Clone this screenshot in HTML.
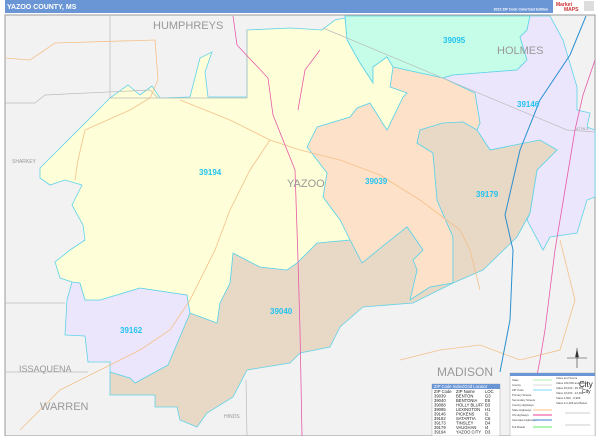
<!DOCTYPE html>
<html><head><meta charset="utf-8"><style>
body{margin:0;width:600px;height:436px;overflow:hidden;background:#fff;font-family:"Liberation Sans",sans-serif}
svg{display:block}
</style></head><body>
<svg width="600" height="436" viewBox="0 0 600 436" xmlns="http://www.w3.org/2000/svg" font-family="Liberation Sans, sans-serif">
<rect x="0" y="0" width="600" height="436" fill="#fff"/>
<rect x="5" y="15" width="590" height="421" fill="#f2f2f2" stroke="#999" stroke-width="1"/>
<!-- header -->
<rect x="5" y="0" width="548" height="13" fill="#6a96d6"/>
<text x="7" y="9" font-size="7" font-weight="bold" fill="#fff">YAZOO COUNTY, MS</text>
<text x="548" y="10.5" font-size="3.5" font-weight="bold" fill="#fff" text-anchor="end">2022 ZIP Code ColorCast Edition</text>
<rect x="554" y="0" width="41" height="13" fill="#fff"/>
<text x="556" y="6" font-size="5" fill="#c33" font-weight="bold">Market</text>
<text x="564" y="11" font-size="5" fill="#c33" font-weight="bold">MAPS</text>
<rect x="584" y="1" width="10" height="10" fill="#ddd"/>
<!-- zones -->
<g stroke="#5fd3e8" stroke-width="0.8">
<polygon fill="#c5fde8" points="345,16 530,16 527,30 520,37 527,60 517,70 453,75 443,78 393,67 387,57 373,67 373,83 360,63 347,40"/>
<polygon fill="#ece6fd" points="530,16 550,16 563,40 577,87 577,110 590,113 587,127 595,130 595,197 587,200 577,233 550,237 543,250 527,220 530,213 537,170 557,150 540,140 490,150 477,130 480,123 475,93 443,78 453,75 517,70 527,60 520,37 527,30"/>
<polygon fill="#fde1c9" points="393,67 443,78 475,93 480,123 477,130 463,122 443,123 420,130 417,143 433,153 437,200 453,237 453,283 430,287 410,300 417,270 413,260 423,250 407,227 362,263 350,240 340,220 323,197 327,173 307,147 317,127 350,117 357,108 370,103 387,130 403,97 407,93 390,87"/>
<polygon fill="#e8d8c6" points="420,130 443,123 463,122 477,130 490,150 540,140 557,150 537,170 530,213 517,237 483,270 453,283 453,237 437,200 433,153 417,143"/>
<polygon fill="#e8d8c6" points="190,313 217,323 220,303 230,283 233,253 260,267 287,270 297,263 317,243 350,240 362,263 407,227 423,250 413,260 417,270 410,300 430,287 453,283 413,303 363,307 340,327 330,347 300,353 290,363 247,370 233,397 207,413 197,427 180,420 177,407 155,407 155,395 110,395 110,372 130,378 135,383 168,365"/>
<polygon fill="#ece6fd" points="72,282 67,300 65,335 85,336 88,362 110,362 110,372 130,378 135,383 168,365 190,313 187,295 140,288 100,300 85,300 80,283"/>
<polygon fill="#fefed8" points="247,30 290,28 322,30 335,20 345,18 347,40 360,63 373,83 373,67 387,57 393,67 390,87 407,93 403,97 387,130 370,103 357,108 350,117 317,127 307,147 327,173 323,197 340,220 350,240 317,243 297,263 287,270 260,267 233,253 230,283 220,303 217,323 190,313 187,295 140,288 100,300 85,300 80,283 72,282 60,278 55,262 70,250 85,240 83,225 72,205 82,185 65,180 50,185 40,178 40,168 110,98 128,85 140,95 152,86 160,98 190,97 200,58 212,52 205,72 208,97 247,97"/>
</g>
<!-- county lines -->
<g stroke="#bbb" stroke-width="0.7" fill="none">
<polyline points="110,16 110,98 247,98 247,30"/>
<polyline points="5,103 35,103 45,95 150,90 158,98"/>
<polyline points="5,303 65,303"/>
<polyline points="5,372 88,372"/>
<polyline points="323,28 567,130 595,132"/>
<polyline points="246,380 247,436"/>
</g>
<!-- roads -->
<g fill="none" stroke-width="0.8">
<polyline stroke="#f4c08a" points="5,58 30,60 55,43 155,40 158,80 150,98 130,110 85,130 78,160 75,180"/>
<polyline stroke="#f4c08a" points="180,100 230,120 270,140 300,150 340,160 380,175 420,200 460,230 470,250 480,290"/>
<polyline stroke="#f4c08a" points="270,140 250,170 230,210 215,250 190,300 170,330 140,350 100,370 60,390 20,430"/>
<polyline stroke="#f4c08a" points="560,240 575,300 560,350 520,360 480,345 440,350 400,360"/>
<polyline stroke="#e75aa8" points="233,16 237,45 268,78 273,115 295,170 298,260 300,330 302,436"/>
<polyline stroke="#e75aa8" points="298,110 305,70 320,50"/>
<polyline stroke="#e75aa8" points="595,60 583,95 575,130 565,190 555,250 545,330 540,360 525,436"/>
<polyline stroke="#2a8fd0" stroke-width="1" points="586,16 570,55 540,100 520,150 505,215 513,250 510,320 500,372"/>
</g>
<!-- labels -->
<g fill="#999" font-size="11">
<text x="153" y="29">HUMPHREYS</text>
<text x="497" y="54">HOLMES</text>
<text x="287" y="187" font-size="11">YAZOO</text>
<text x="19" y="372" font-size="9">ISSAQUENA</text>
<text x="40" y="410">WARREN</text>
<text x="437" y="376" font-size="12">MADISON</text>
<text x="12" y="163" font-size="5">SHARKEY</text>
<text x="224" y="418" font-size="5">HINDS</text>
<text x="576" y="130" font-size="3.5">ATTALA</text>
</g>
<g fill="#22c3f0" font-size="8" font-weight="bold">
<text x="443" y="43">39095</text>
<text x="517" y="107">39146</text>
<text x="199" y="175">39194</text>
<text x="365" y="184">39039</text>
<text x="476" y="197">39179</text>
<text x="270" y="314">39040</text>
<text x="120" y="333">39162</text>
</g>
<!-- compass -->
<g stroke="#333" stroke-width="0.6" fill="#333">
<line x1="577" y1="348" x2="577" y2="368"/><line x1="567" y1="358" x2="587" y2="358"/>
<polygon points="577,350 575.5,357 578.5,357"/>
</g>
<!-- index -->
<g font-size="4.2" fill="#222">
<rect x="432" y="384" width="68" height="52" fill="#fff" stroke="#aaa" stroke-width="0.5"/>
<rect x="432" y="384" width="68" height="5" fill="#6a96d6"/>
<text x="434" y="388" fill="#fff">ZIP Code Index/Grid Locator</text>
<text x="434" y="393">ZIP Code</text><text x="456" y="393">ZIP Name</text><text x="485" y="393">LOC</text>
<text x="434" y="397.5">39039</text><text x="456" y="397.5">BENTON</text><text x="485" y="397.5">G3</text>
<text x="434" y="402">39040</text><text x="456" y="402">BENTONIA</text><text x="485" y="402">E6</text>
<text x="434" y="406.5">39088</text><text x="456" y="406.5">HOLLY BLUFF</text><text x="485" y="406.5">B3</text>
<text x="434" y="411">39095</text><text x="456" y="411">LEXINGTON</text><text x="485" y="411">H1</text>
<text x="434" y="415.5">39146</text><text x="456" y="415.5">PICKENS</text><text x="485" y="415.5">I2</text>
<text x="434" y="420">39162</text><text x="456" y="420">SATARTIA</text><text x="485" y="420">C6</text>
<text x="434" y="424.5">39173</text><text x="456" y="424.5">TINSLEY</text><text x="485" y="424.5">D4</text>
<text x="434" y="429">39179</text><text x="456" y="429">VAUGHAN</text><text x="485" y="429">I4</text>
<text x="434" y="433.5">39194</text><text x="456" y="433.5">YAZOO CITY</text><text x="485" y="433.5">D3</text>
</g>
<!-- legend -->
<g font-size="2.8" fill="#444">
<rect x="510" y="373" width="85" height="63" fill="#fff" stroke="#aaa" stroke-width="0.5"/>
<rect x="510" y="373" width="85" height="3" fill="#6a96d6"/>
<text x="512" y="381">State</text><line x1="533" y1="380" x2="552" y2="380" stroke="#9e9" stroke-width="0.8"/>
<text x="512" y="386">County</text><line x1="533" y1="385" x2="552" y2="385" stroke="#ccc" stroke-width="0.8"/>
<text x="512" y="391">ZIP Code</text><line x1="533" y1="390" x2="552" y2="390" stroke="#5cf" stroke-width="0.8"/>
<text x="512" y="396">Primary Streets</text>
<text x="512" y="401">Secondary Streets</text>
<text x="512" y="406">County Highways</text>
<text x="512" y="411">State Highways</text><line x1="533" y1="410" x2="552" y2="410" stroke="#fc9" stroke-width="1.2"/>
<text x="512" y="416">US Highways</text><line x1="533" y1="415" x2="552" y2="415" stroke="#e6a" stroke-width="1.2"/>
<text x="512" y="421">Interstate Highways</text><line x1="533" y1="420" x2="552" y2="420" stroke="#69d" stroke-width="1.2"/>
<text x="512" y="428">Toll Roads</text><line x1="533" y1="427" x2="552" y2="427" stroke="#9e9" stroke-width="1.5"/>
<text x="556" y="379">Cities and Towns</text>
<text x="556" y="384">Class 100,000 and Above</text>
<text x="556" y="389">Class 25,000 - 99,999</text>
<text x="556" y="394">Class 10,000 - 24,999</text>
<text x="556" y="399">Class 2,500 - 9,999</text>
<text x="556" y="404">Class 0-2,499 and Below</text>
<text x="579" y="387" font-size="8" fill="#222">City</text>
<text x="582" y="393" font-size="5" fill="#222">City</text>
<line x1="565" y1="413" x2="590" y2="413" stroke="#999" stroke-width="0.5"/>
<line x1="565" y1="425" x2="590" y2="425" stroke="#999" stroke-width="0.5"/>
</g>
</svg>
</body></html>
